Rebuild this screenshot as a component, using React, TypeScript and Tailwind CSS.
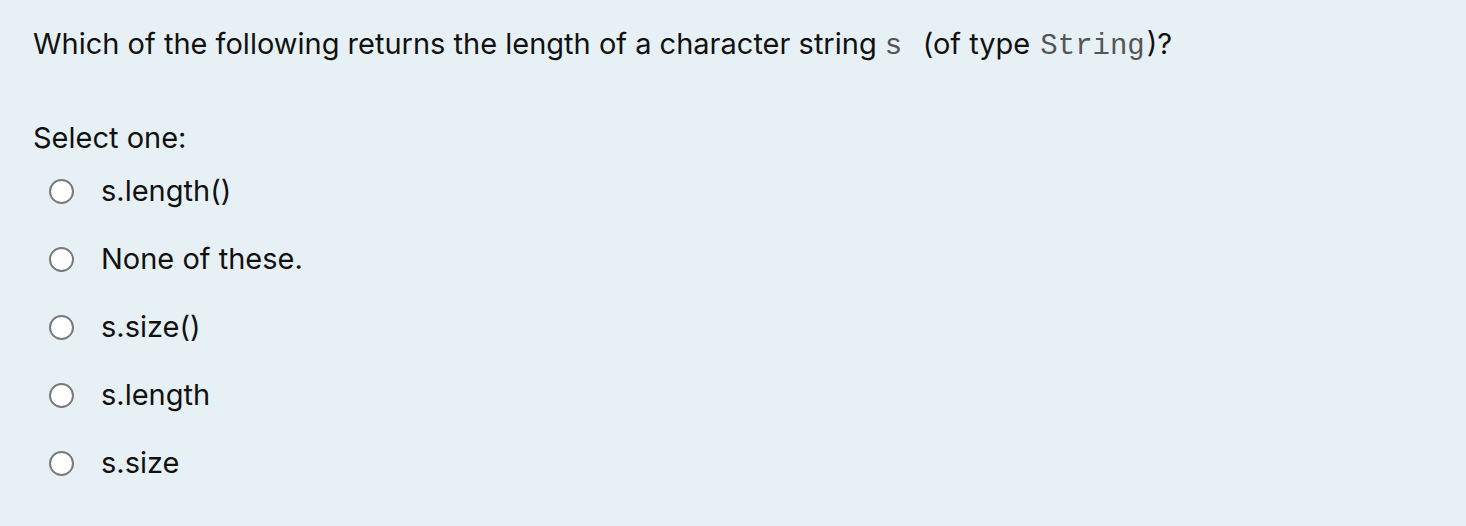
const options = ["s.length()", "None of these.", "s.size()", "s.length", "s.size"];

const Radio = () => (
  <span className="w-[25px] h-[25px] rounded-full border-2 border-[#7a7a7a] bg-white shrink-0" />
);

export default function App() {
  return (
    <div
      className="w-[1466px] h-[526px] bg-[#e7f1f5] text-[#111] pl-[33px] pt-[25px]"
      style={{ fontFamily: "Inter, 'Noto Sans', sans-serif" }}
    >
      <p className="text-[29px] leading-[38px]">
        Which of the following returns the length of a character string{" "}
        <code className="font-['Liberation_Mono',monospace] text-[#555]">s </code>{" "}
        <span className="ml-[3px]">(of type</span>{" "}
        <code className="font-['Liberation_Mono',monospace] text-[#555] mx-[2px]">String</code>)?
      </p>
      <p className="text-[29px] leading-[38px] mt-[53px]">Select one:</p>
      <div className="flex flex-col gap-[30px] mt-[15px] pl-[16px]">
        {options.map((o) => (
          <label key={o} className="flex items-center gap-[27px] h-[38px] text-[29px]">
            <Radio />
            <span>{o}</span>
          </label>
        ))}
      </div>
    </div>
  );
}
